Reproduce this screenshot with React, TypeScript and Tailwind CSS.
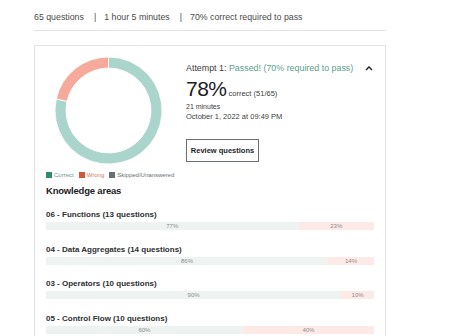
import React from "react";

interface IArea {
    title: string,
    correct: number,
}

const areas: IArea[] = [
    { title: "06 - Functions (13 questions)", correct: 77 },
    { title: "04 - Data Aggregates (14 questions)", correct: 86 },
    { title: "03 - Operators (10 questions)", correct: 90 },
    { title: "05 - Control Flow (10 questions)", correct: 60 },
];

// annular sector, angles in degrees from 12 o'clock, clockwise
const sector = (cx: number, cy: number, r0: number, r1: number, a0: number, a1: number) => {
    const p = (r: number, a: number) => {
        const rad = (a * Math.PI) / 180;
        return [cx + r * Math.sin(rad), cy - r * Math.cos(rad)].map((v) => v.toFixed(2)).join(" ");
    };
    const large = a1 - a0 > 180 ? 1 : 0;
    return `M ${p(r1, a0)} A ${r1} ${r1} 0 ${large} 1 ${p(r1, a1)} L ${p(r0, a1)} A ${r0} ${r0} 0 ${large} 0 ${p(r0, a0)} Z`;
};

function Donut() {
    const split = (51 / 65) * 360;
    return (
        <svg width="107" height="107" viewBox="0 0 107 107">
            <path d={sector(53.5, 53.5, 42.5, 53.5, 0, split)} fill="#aad5cc" stroke="#fff" strokeWidth="0.8" />
            <path d={sector(53.5, 53.5, 42.5, 53.5, split, 360)} fill="#f5aa9b" stroke="#fff" strokeWidth="0.8" />
        </svg>
    );
}

function AreaRow({ area }: { area: IArea }) {
    const wrong = 100 - area.correct;
    return (
        <div className="flex flex-col">
            <div className="text-[8px] font-bold leading-[10px] text-[#2d2f31]">{area.title}</div>
            <div className="mt-[2px] flex h-[8px] w-full text-[6px] leading-[8px] text-[#8a8d8f]">
                <div className="flex items-center justify-center bg-[#eef3f1]" style={{ width: `${area.correct}%` }}>
                    {area.correct}%
                </div>
                <div className="flex items-center justify-center bg-[#fde9e6]" style={{ width: `${wrong}%` }}>
                    {wrong}%
                </div>
            </div>
        </div>
    );
}

export default function App() {
    return (
        <div
            className="h-[336px] w-[474px] overflow-hidden bg-white"
            style={{ fontFamily: '"Liberation Sans", Arial, sans-serif' }}
        >
            <div className="ml-[34px] w-[352px]">
                {/* summary line */}
                <div className="flex h-[31px] items-center border-b border-[#e4e4e4] pt-[5px] text-[8.8px] text-[#4a4a4a]">
                    <span>65 questions</span>
                    <span className="ml-[10px] mr-[8px]">|</span>
                    <span>1 hour 5 minutes</span>
                    <span className="ml-[10px] mr-[8px]">|</span>
                    <span>70% correct required to pass</span>
                </div>

                {/* attempt card */}
                <div className="mt-[14px] h-[400px] border border-[#e2e3e4] px-[11px] pt-[11px]">
                    <div className="flex">
                        <div className="flex w-[140px] flex-col">
                            <div className="ml-[9px]">
                                <Donut />
                            </div>
                            <div className="mt-[7px] flex items-center text-[6px] leading-[8px]">
                                <span className="mr-[2px] h-[6px] w-[6px] bg-[#2e8b72]" />
                                <span className="mr-[5px] text-[#5f9c8d]">Correct</span>
                                <span className="mr-[2px] h-[6px] w-[6px] bg-[#d4573b]" />
                                <span className="mr-[5px] text-[#d87a66]">Wrong</span>
                                <span className="mr-[2px] h-[6px] w-[6px] bg-[#6a6f73]" />
                                <span className="text-[#6a6f73]">Skipped/Unanswered</span>
                            </div>
                        </div>
                        <div className="flex flex-1 flex-col pt-[5px]">
                            <div className="flex items-center justify-between">
                                <div className="text-[8.9px] leading-[12px] text-[#3e4143]">
                                    Attempt 1: <span className="text-[#5a9f8f]">Passed! (70% required to pass)</span>
                                </div>
                                <svg width="8" height="6" viewBox="0 0 8 6" className="mr-[1px]">
                                    <path d="M1 5 L4 2 L7 5" fill="none" stroke="#1c1d1f" strokeWidth="1.4" />
                                </svg>
                            </div>
                            <div className="mt-[3px] flex items-baseline">
                                <span className="text-[21px] leading-[24px] tracking-[-0.5px] text-[#1c1d1f]">78%</span>
                                <span className="ml-[2px] text-[7.5px] text-[#3e4143]">correct (51/65)</span>
                            </div>
                            <div className="mt-[1px] text-[7px] leading-[10px] text-[#3e4143]">21 minutes</div>
                            <div className="text-[7.5px] leading-[10px] text-[#3e4143]">October 1, 2022 at 09:49 PM</div>
                            <div className="mt-[14px]">
                                <div className="inline-flex h-[23px] w-[73px] items-center justify-center border border-[#6a6f73] text-[7.5px] font-bold text-[#1c1d1f]">
                                    Review questions
                                </div>
                            </div>
                        </div>
                    </div>

                    <div className="mt-[6px] text-[9.5px] font-bold leading-[12px] tracking-[-0.2px] text-[#1c1d1f]">
                        Knowledge areas
                    </div>

                    <div className="mt-[13px] flex flex-col gap-[14.6px]">
                        {areas.map((a) => (
                            <AreaRow key={a.title} area={a} />
                        ))}
                    </div>
                </div>
            </div>
        </div>
    );
}
